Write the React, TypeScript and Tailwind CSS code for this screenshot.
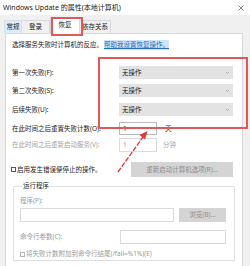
import React from 'react';

const font = "font-['Noto_Sans','Noto_Sans_CJK_SC',sans-serif]";

function Chevron() {
  return (
    <svg width="5" height="4" viewBox="0 0 5 4" className="shrink-0">
      <path d="M1 1 L2.5 2.5 L4 1" fill="none" stroke="#9a9a9a" strokeWidth="0.7" />
    </svg>
  );
}

function Row({ label, mt }: { label: string; mt: string }) {
  return (
    <div className={`flex items-center h-[13px] ${mt}`}>
      <div className="w-[107px] text-[6.5px] leading-[10px] text-[#1b1b1b] whitespace-nowrap">{label}</div>
      <div className="flex items-center justify-between w-[114px] h-[13px] bg-[#e3e3e3] pl-[3px] pr-[3px]">
        <span className="text-[6.5px] leading-[10px] text-[#1b1b1b]">无操作</span>
        <Chevron />
      </div>
    </div>
  );
}

export default function App() {
  return (
    <div className={`relative w-[250px] h-[266px] overflow-hidden bg-[#f0f0f0] ${font}`}>
      {/* title bar */}
      <div className="flex items-center justify-between h-[15px] bg-white pl-[3px] pr-[6px]">
        <span className="text-[7px] leading-[10px] text-[#1b1b1b] whitespace-nowrap">Windows Update 的属性(本地计算机)</span>
        <svg width="6" height="6" viewBox="0 0 6 6">
          <path d="M0.5 0.5 L5.5 5.5 M5.5 0.5 L0.5 5.5" stroke="#333" strokeWidth="0.6" />
        </svg>
      </div>

      {/* tabs */}
      <div className="flex items-end h-[18px] pl-[4px] text-[6.5px] leading-[10px] text-[#1b1b1b]">
        <div className="flex items-center justify-center w-[18px] h-[13px] bg-[#dfecf8] border-t border-l border-r border-[#d6dfe8]">常规</div>
        <div className="flex items-center justify-center w-[28px] h-[13px] border-t border-r border-[#d9d9d9]">登录</div>
        <div className="relative z-10 flex items-center justify-center w-[30px] h-[17px] -mb-px bg-white border-t border-l border-r border-[#d9d9d9] pb-[2px]">
          恢复
        </div>
        <div className="flex items-center justify-center w-[31px] h-[13px] border-t border-r border-[#d9d9d9]">依存关系</div>
      </div>

      {/* panel */}
      <div className="ml-[5px] w-[238px] h-[240px] bg-white border border-[#d9d9d9] pl-[6px] pt-[6px]">
        <div className="flex items-center h-[10px] text-[6.5px] leading-[10px] text-[#1b1b1b] whitespace-nowrap">
          选择服务失败时计算机的反应。
          <span className="ml-[1px] bg-[#cfe5f7] text-[#2a6ebb] underline">帮助我设置恢复操作。</span>
        </div>

        <Row label="第一次失败(F):" mt="mt-[16px]" />
        <Row label="第二次失败(S):" mt="mt-[5px]" />
        <Row label="后续失败(U):" mt="mt-[6px]" />

        <div className="flex items-center h-[13px] mt-[6px] text-[6.5px] leading-[10px] text-[#1b1b1b]">
          <div className="w-[107px] whitespace-nowrap">在此时间之后重置失败计数(O):</div>
          <div className="w-[38px] h-[13px] border border-[#b9b9b9] bg-white pl-[3px] flex items-center">1</div>
          <span className="ml-[8px]">天</span>
        </div>

        <div className="flex items-center h-[13px] mt-[3px] text-[6.5px] leading-[10px] text-[#a3a3a3]">
          <div className="w-[107px] whitespace-nowrap">在此时间之后重新启动服务(V):</div>
          <div className="w-[38px] h-[14px] border border-[#dadada] bg-white pl-[3px] flex items-center">1</div>
          <span className="ml-[6px]">分钟</span>
        </div>

        <div className="flex items-center justify-between h-[15px] mt-[11px] pr-[9px] text-[6.5px] leading-[10px]">
          <div className="flex items-center -ml-[1px] text-[#1b1b1b] whitespace-nowrap">
            <span className="w-[5px] h-[5px] border border-[#555] bg-white mr-[1px]" />
            启用发生错误便停止的操作。
          </div>
          <div className="flex items-center justify-center w-[102px] h-[15px] bg-[#d4d4d4] text-[#8e8e8e]">
            重新启动计算机选项(R)...
          </div>
        </div>

        <fieldset className="mt-[4px] ml-[1px] w-[222px] h-[80px] border border-[#e0e0e0] pl-[6px] text-[6.5px] leading-[10px] text-[#9a9a9a]">
          <legend className="ml-[2px] px-[1px] text-[#1b1b1b]">运行程序</legend>
          <div className="h-[10px] mt-[5px]">程序(P):</div>
          <div className="flex items-center mt-[2px]">
            <div className="w-[154px] h-[14px] border border-[#dadada] bg-white" />
            <div className="flex items-center justify-center ml-[5px] w-[47px] h-[14px] bg-[#d4d4d4] text-[#8e8e8e]">浏览(B)...</div>
          </div>
          <div className="flex items-center mt-[8px]">
            <div className="w-[100px]">命令行参数(C):</div>
            <div className="w-[106px] h-[14px] border border-[#dadada] bg-white" />
          </div>
          <div className="flex items-center h-[10px] mt-[5px] whitespace-nowrap">
            <span className="w-[5px] h-[5px] border border-[#b5b5b5] bg-white mr-[1px]" />
            将失败计数附加到命令行结尾(/fail=%1%)(E)
          </div>
        </fieldset>
      </div>

      {/* red annotations */}
      <div className="absolute left-[51px] top-[17px] w-[32px] h-[19px] border-2 border-[#e0585a] z-20" />
      <div className="absolute left-[98px] top-[57px] w-[150px] h-[72px] border-2 border-[#e0585a] z-20" />
      <svg className="absolute left-0 top-0 z-20" width="250" height="266" viewBox="0 0 250 266">
        <line x1="118" y1="172" x2="143" y2="137" stroke="#e0383a" strokeWidth="1.3" strokeDasharray="5 1.5" />
        <path d="M147.5 131 L139.5 135 L145 139.5 Z" fill="#e0383a" />
      </svg>
    </div>
  );
}
